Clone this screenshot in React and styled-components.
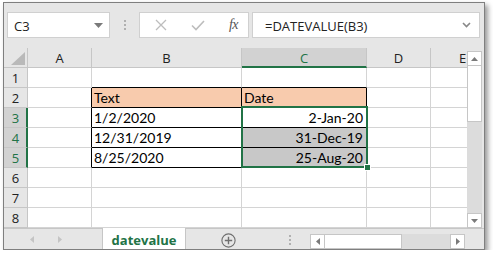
import React from "react";
import styled, { createGlobalStyle } from "styled-components";

const GREEN = "#217346";
const GRID = "#d4d4d4";
const HEAD_LINE = "#c6c6c6";

const GlobalStyle = createGlobalStyle`
    body {
        margin: 0;
        background: #fff;
    }
    * {
        box-sizing: border-box;
    }
`;

const cols = [
    { name: "A", width: 64 },
    { name: "B", width: 150 },
    { name: "C", width: 125 },
    { name: "D", width: 64 },
    { name: "E", width: 64 },
];

const data = {
    2: { B: { text: "Text", fill: "#f8cbad" }, C: { text: "Date", fill: "#f8cbad" } },
    3: { B: { text: "1/2/2020" }, C: { text: "2-Jan-20", right: true } },
    4: { B: { text: "12/31/2019" }, C: { text: "31-Dec-19", right: true, fill: "#c8c8c8" } },
    5: { B: { text: "8/25/2020" }, C: { text: "25-Aug-20", right: true, fill: "#c8c8c8" } },
};

const boxedCols = ["B", "C"];
const boxedRows = [2, 3, 4, 5];
const selectedRows = [3, 4, 5];

const App = () => {
    const cellBorders = (col, row) => {
        const inBox = boxedCols.includes(col) && boxedRows.includes(row);
        const leftOfBox = col === "A" && boxedRows.includes(row);
        const aboveBox = boxedCols.includes(col) && row === 1;
        return {
            rb: inBox || leftOfBox ? "#000" : GRID,
            bb: inBox || aboveBox ? "#000" : GRID,
        };
    };

    return (
        <>
            <GlobalStyle />
            <Window>
                <FormulaBar>
                    <NameBox>
                        <span>C3</span>
                        <svg width="9" height="5" viewBox="0 0 9 5">
                            <path d="M0 0h9L4.5 5z" fill="#7a7a7a" />
                        </svg>
                    </NameBox>
                    <Grip>
                        <i />
                        <i />
                        <i />
                    </Grip>
                    <FxButtons>
                        <svg width="12" height="12" viewBox="0 0 12 12">
                            <path d="M1 1l10 10M11 1L1 11" stroke="#bdbdbd" strokeWidth="1.3" fill="none" />
                        </svg>
                        <svg width="14" height="11" viewBox="0 0 14 11">
                            <path d="M1 5.5l4 4L13 1" stroke="#bdbdbd" strokeWidth="1.6" fill="none" />
                        </svg>
                        <FxLabel>fx</FxLabel>
                    </FxButtons>
                    <FormulaBox>
                        <span>=DATEVALUE(B3)</span>
                        <svg width="9" height="6" viewBox="0 0 9 6">
                            <path d="M1 1l3.5 3.5L8 1" stroke="#888" strokeWidth="1.6" fill="none" />
                        </svg>
                    </FormulaBox>
                </FormulaBar>

                <SheetArea>
                    <Grid>
                        <Row>
                            <Corner>
                                <svg width="14" height="13" viewBox="0 0 14 13">
                                    <path d="M14 0v13H0z" fill="#b9b9b9" />
                                </svg>
                            </Corner>
                            {cols.map((c) => (
                                <ColHead key={c.name} $w={c.width} $active={c.name === "C"}>
                                    {c.name}
                                </ColHead>
                            ))}
                        </Row>
                        {[1, 2, 3, 4, 5, 6, 7, 8].map((row) => (
                            <Row key={row}>
                                <RowHead $active={selectedRows.includes(row)}>{row}</RowHead>
                                {cols.map((c) => {
                                    const cell = data[row]?.[c.name];
                                    const b = cellBorders(c.name, row);
                                    return (
                                        <Cell
                                            key={c.name}
                                            $w={c.width}
                                            $rb={b.rb}
                                            $bb={b.bb}
                                            $fill={cell?.fill}
                                            $right={cell?.right}
                                        >
                                            {cell?.text}
                                        </Cell>
                                    );
                                })}
                            </Row>
                        ))}
                        <Selection>
                            <FillHandle />
                        </Selection>
                    </Grid>
                    <VScroll>
                        <ScrollBtn>
                            <svg width="7" height="4" viewBox="0 0 7 4">
                                <path d="M0 4h7L3.5 0z" fill="#7a7a7a" />
                            </svg>
                        </ScrollBtn>
                        <VThumb />
                        <VTrack />
                        <ScrollBtn>
                            <svg width="7" height="4" viewBox="0 0 7 4">
                                <path d="M0 0h7L3.5 4z" fill="#7a7a7a" />
                            </svg>
                        </ScrollBtn>
                    </VScroll>
                </SheetArea>

                <TabBar>
                    <TabNav>
                        <svg width="4" height="7" viewBox="0 0 4 7">
                            <path d="M4 0v7L0 3.5z" fill="#c4c4c4" />
                        </svg>
                        <svg width="4" height="7" viewBox="0 0 4 7">
                            <path d="M0 0v7l4-3.5z" fill="#c4c4c4" />
                        </svg>
                    </TabNav>
                    <SheetTab>datevalue</SheetTab>
                    <AddSheet>
                        <svg width="15" height="15" viewBox="0 0 15 15">
                            <circle cx="7.5" cy="7.5" r="6.6" stroke="#6f6f6f" strokeWidth="1.1" fill="none" />
                            <path d="M7.5 3.8v7.4M3.8 7.5h7.4" stroke="#6f6f6f" strokeWidth="1.4" />
                        </svg>
                    </AddSheet>
                    <HGrip>
                        <i />
                        <i />
                        <i />
                    </HGrip>
                    <HScroll>
                        <ScrollBtn>
                            <svg width="4" height="7" viewBox="0 0 4 7">
                                <path d="M4 0v7L0 3.5z" fill="#7a7a7a" />
                            </svg>
                        </ScrollBtn>
                        <HThumb />
                        <HTrack />
                        <ScrollBtn>
                            <svg width="4" height="7" viewBox="0 0 4 7">
                                <path d="M0 0v7l4-3.5z" fill="#7a7a7a" />
                            </svg>
                        </ScrollBtn>
                    </HScroll>
                </TabBar>
            </Window>
        </>
    );
};

const Window = styled.div`
    margin: 2px 0 0 3px;
    width: 482px;
    height: 248px;
    border: 1px solid #7f7f7f;
    background: #e6e6e6;
    box-shadow: 3px 3px 5px rgba(0, 0, 0, 0.4);
    display: flex;
    flex-direction: column;
    font-family: "Open Sans", "Noto Sans", sans-serif;
    overflow: hidden;
`;

const FormulaBar = styled.div`
    height: 45px;
    flex-shrink: 0;
    display: flex;
    align-items: flex-start;
    padding: 9px 0 0 3px;
`;

const NameBox = styled.div`
    width: 103px;
    height: 26px;
    background: #fff;
    border: 1px solid #d0d0d0;
    display: flex;
    align-items: center;
    justify-content: space-between;
    padding: 0 6px 0 6px;
    font-size: 13px;
    color: #222;
    span {
        padding-top: 1px;
    }
`;

const Grip = styled.div`
    width: 29px;
    height: 26px;
    display: flex;
    flex-direction: column;
    align-items: center;
    justify-content: center;
    gap: 2px;
    i {
        width: 2px;
        height: 2px;
        background: #b0b0b0;
    }
`;

const FxButtons = styled.div`
    width: 110px;
    height: 26px;
    background: #fff;
    border: 1px solid #d0d0d0;
    display: flex;
    align-items: center;
    justify-content: space-between;
    padding: 0 10px 0 15px;
`;

const FxLabel = styled.span`
    font-family: "Liberation Serif", serif;
    font-style: italic;
    font-size: 14px;
    color: #555;
    letter-spacing: -0.5px;
`;

const FormulaBox = styled.div`
    width: 228px;
    height: 26px;
    margin-left: 3px;
    background: #fff;
    border: 1px solid #d0d0d0;
    display: flex;
    align-items: center;
    justify-content: space-between;
    padding: 0 8px 0 12px;
    font-size: 13px;
    color: #222;
    span {
        padding-top: 1px;
    }
`;

const SheetArea = styled.div`
    height: 180px;
    flex-shrink: 0;
    display: flex;
`;

const Grid = styled.div`
    position: relative;
    width: 463px;
    flex-shrink: 0;
    background: #fff;
    overflow: hidden;
    display: flex;
    flex-direction: column;
`;

const Row = styled.div`
    display: flex;
    flex: 0 0 20px;
    width: 600px;
    height: 20px;
`;

const Corner = styled.div`
    flex: 0 0 24px;
    background: #e6e6e6;
    border-right: 1px solid ${HEAD_LINE};
    border-bottom: 1px solid ${HEAD_LINE};
    display: flex;
    align-items: flex-end;
    justify-content: flex-end;
    padding: 0 2px 2px 0;
`;

const ColHead = styled.div`
    flex: 0 0 ${(p) => p.$w}px;
    background: ${(p) => (p.$active ? "#d2d2d2" : "#e6e6e6")};
    color: ${(p) => (p.$active ? GREEN : "#222")};
    border-right: 1px solid ${HEAD_LINE};
    border-bottom: ${(p) => (p.$active ? `2px solid ${GREEN}` : `1px solid ${HEAD_LINE}`)};
    font-size: 13px;
    display: flex;
    align-items: center;
    justify-content: center;
    padding-top: ${(p) => (p.$active ? "1px" : "0")};
`;

const RowHead = styled.div`
    flex: 0 0 24px;
    background: ${(p) => (p.$active ? "#d2d2d2" : "#e6e6e6")};
    color: ${(p) => (p.$active ? GREEN : "#222")};
    border-right: ${(p) => (p.$active ? `2px solid ${GREEN}` : `1px solid ${HEAD_LINE}`)};
    border-bottom: 1px solid ${HEAD_LINE};
    font-size: 13px;
    display: flex;
    align-items: center;
    justify-content: center;
    padding: 1px 0 0 ${(p) => (p.$active ? "1px" : "0")};
`;

const Cell = styled.div`
    flex: 0 0 ${(p) => p.$w}px;
    background: ${(p) => p.$fill || "#fff"};
    border-right: 1px solid ${(p) => p.$rb};
    border-bottom: 1px solid ${(p) => p.$bb};
    font-family: Lato, "Liberation Sans", sans-serif;
    font-size: 14px;
    line-height: 16px;
    color: #000;
    display: flex;
    align-items: flex-end;
    justify-content: ${(p) => (p.$right ? "flex-end" : "flex-start")};
    padding: 0 3px 1px 2px;
    white-space: nowrap;
`;

const Selection = styled.div`
    position: absolute;
    left: 237px;
    top: 58px;
    width: 127px;
    height: 62px;
    border: 2px solid ${GREEN};
    pointer-events: none;
`;

const FillHandle = styled.div`
    position: absolute;
    right: -5px;
    bottom: -5px;
    width: 7px;
    height: 7px;
    background: ${GREEN};
    border: 1px solid #fff;
`;

const VScroll = styled.div`
    width: 15px;
    margin-right: 2px;
    padding-top: 3px;
    display: flex;
    flex-direction: column;
`;

const ScrollBtn = styled.div`
    width: 15px;
    height: 15px;
    flex-shrink: 0;
    background: #fff;
    border: 1px solid #c6c6c6;
    display: flex;
    align-items: center;
    justify-content: center;
`;

const VThumb = styled.div`
    height: 56px;
    background: #fff;
    border: 1px solid #c6c6c6;
    border-top: none;
`;

const VTrack = styled.div`
    flex: 1;
    background: #dcdcdc;
`;

const TabBar = styled.div`
    flex: 1;
    display: flex;
    align-items: stretch;
    border-top: 1px solid #c6c6c6;
`;

const TabNav = styled.div`
    width: 99px;
    border-right: 1px solid #c6c6c6;
    display: flex;
    align-items: center;
    justify-content: flex-start;
    gap: 24px;
    padding-left: 26px;
`;

const SheetTab = styled.div`
    width: 83px;
    margin-top: -1px;
    background: #fff;
    border-right: 1px solid #c6c6c6;
    color: ${GREEN};
    font-weight: 700;
    font-size: 13px;
    display: flex;
    align-items: center;
    justify-content: center;
    padding-top: 2px;
`;

const AddSheet = styled.div`
    width: 84px;
    display: flex;
    align-items: center;
    justify-content: center;
    padding: 2px 0 0 0;
`;

const HGrip = styled.div`
    width: 40px;
    display: flex;
    flex-direction: column;
    align-items: center;
    justify-content: center;
    gap: 2px;
    padding-top: 2px;
    i {
        width: 2px;
        height: 2px;
        background: #b0b0b0;
    }
`;

const HScroll = styled.div`
    width: 155px;
    display: flex;
    align-items: flex-end;
    padding-bottom: 0;
`;

const HThumb = styled.div`
    width: 77px;
    height: 15px;
    background: #fff;
    border: 1px solid #c6c6c6;
    border-left: none;
`;

const HTrack = styled.div`
    flex: 1;
    height: 15px;
    background: #dcdcdc;
`;

export default App;
